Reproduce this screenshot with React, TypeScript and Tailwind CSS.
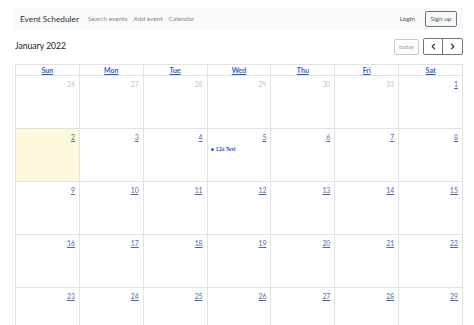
import React from 'react';

const DAYS = ['Sun', 'Mon', 'Tue', 'Wed', 'Thu', 'Fri', 'Sat'];

// Jan 2022 grid: starts Sun Dec 26
const WEEKS: { n: number; other: boolean }[][] = [
  [26, 27, 28, 29, 30, 31].map(n => ({ n, other: true })).concat([{ n: 1, other: false }]),
  [2, 3, 4, 5, 6, 7, 8].map(n => ({ n, other: false })),
  [9, 10, 11, 12, 13, 14, 15].map(n => ({ n, other: false })),
  [16, 17, 18, 19, 20, 21, 22].map(n => ({ n, other: false })),
  [23, 24, 25, 26, 27, 28, 29].map(n => ({ n, other: false })),
];

function Chevron({ dir }: { dir: 'left' | 'right' }) {
  return (
    <svg width="7" height="7" viewBox="0 0 16 16" fill="none" stroke="#212529" strokeWidth="2.6" strokeLinecap="round" strokeLinejoin="round">
      {dir === 'left' ? <path d="M10.5 2.5 5 8l5.5 5.5" /> : <path d="M5.5 2.5 11 8l-5.5 5.5" />}
    </svg>
  );
}

export default function App() {
  return (
    <div className="w-[474px] h-[325px] overflow-hidden bg-white pt-[8px] text-[#212529]" style={{ fontFamily: 'Lato, "Noto Sans", sans-serif' }}>
      {/* Navbar */}
      <div className="ml-[15px] w-[448px] h-[22px] bg-[#f8f9fa] flex items-center pl-[5px] pr-[6px]">
        <span className="text-[8.3px] text-[#333] mr-[9px] leading-none">Event Scheduler</span>
        <div className="flex items-center gap-[6px] text-[6.5px] text-[#8a8a8a] leading-none">
          <span>Search events</span>
          <span>Add event</span>
          <span>Calendar</span>
        </div>
        <div className="ml-auto flex items-center">
          <span className="text-[6.5px] text-[#555] mr-[10px] leading-none">Login</span>
          <span className="h-[16px] w-[32px] border border-[#6c757d] rounded-[2px] flex items-center justify-center text-[6.5px] text-[#555] leading-none">Sign up</span>
        </div>
      </div>

      {/* Toolbar */}
      <div className="ml-[15px] w-[448px] flex items-center mt-[8px] h-[17px]">
        <span className="text-[8.6px] text-[#222] leading-none">January 2022</span>
        <div className="ml-auto flex items-center">
          <span className="h-[16px] w-[25px] border border-[#c8c8c8] rounded-[2px] flex items-center justify-center text-[6px] text-[#999] leading-none mr-[4px]">today</span>
          <div className="flex h-[17px] border border-[#6c757d] rounded-[2px]">
            <span className="w-[19px] flex items-center justify-center border-r border-[#6c757d]"><Chevron dir="left" /></span>
            <span className="w-[19px] flex items-center justify-center"><Chevron dir="right" /></span>
          </div>
        </div>
      </div>

      {/* Calendar */}
      <div className="ml-[15px] w-[448px] mt-[9px] border-l border-t border-[#e2e2e2]">
        <div className="grid grid-cols-7">
          {DAYS.map(d => (
            <div key={d} className="h-[11px] border-r border-b border-[#e2e2e2] flex items-center justify-center">
              <span className="text-[7px] font-bold text-[#2d62c4] underline leading-none">{d}</span>
            </div>
          ))}
        </div>
        {WEEKS.map((week, wi) => (
          <div key={wi} className="grid grid-cols-7">
            {week.map((c, ci) => {
              const isToday = wi === 1 && ci === 0;
              return (
                <div key={ci} className={`h-[53px] border-r border-b border-[#e2e2e2] flex flex-col pt-[5px] ${isToday ? 'bg-[#fef8dc]' : ''}`}>
                  <div className="flex justify-end pr-[4px]">
                    <span className={`text-[6.8px] leading-none ${c.other ? 'text-[#c4c4c4]' : 'text-[#4a69a8] underline'}`}>{c.n}</span>
                  </div>
                  {wi === 1 && ci === 3 && (
                    <div className="flex items-center mt-[6px] pl-[3px] gap-[2px]">
                      <span className="w-[3px] h-[3px] rounded-full bg-[#2d62c4]" />
                      <span className="text-[5.4px] text-[#2d62c4] font-bold leading-none">12a Test</span>
                    </div>
                  )}
                </div>
              );
            })}
          </div>
        ))}
      </div>
    </div>
  );
}
